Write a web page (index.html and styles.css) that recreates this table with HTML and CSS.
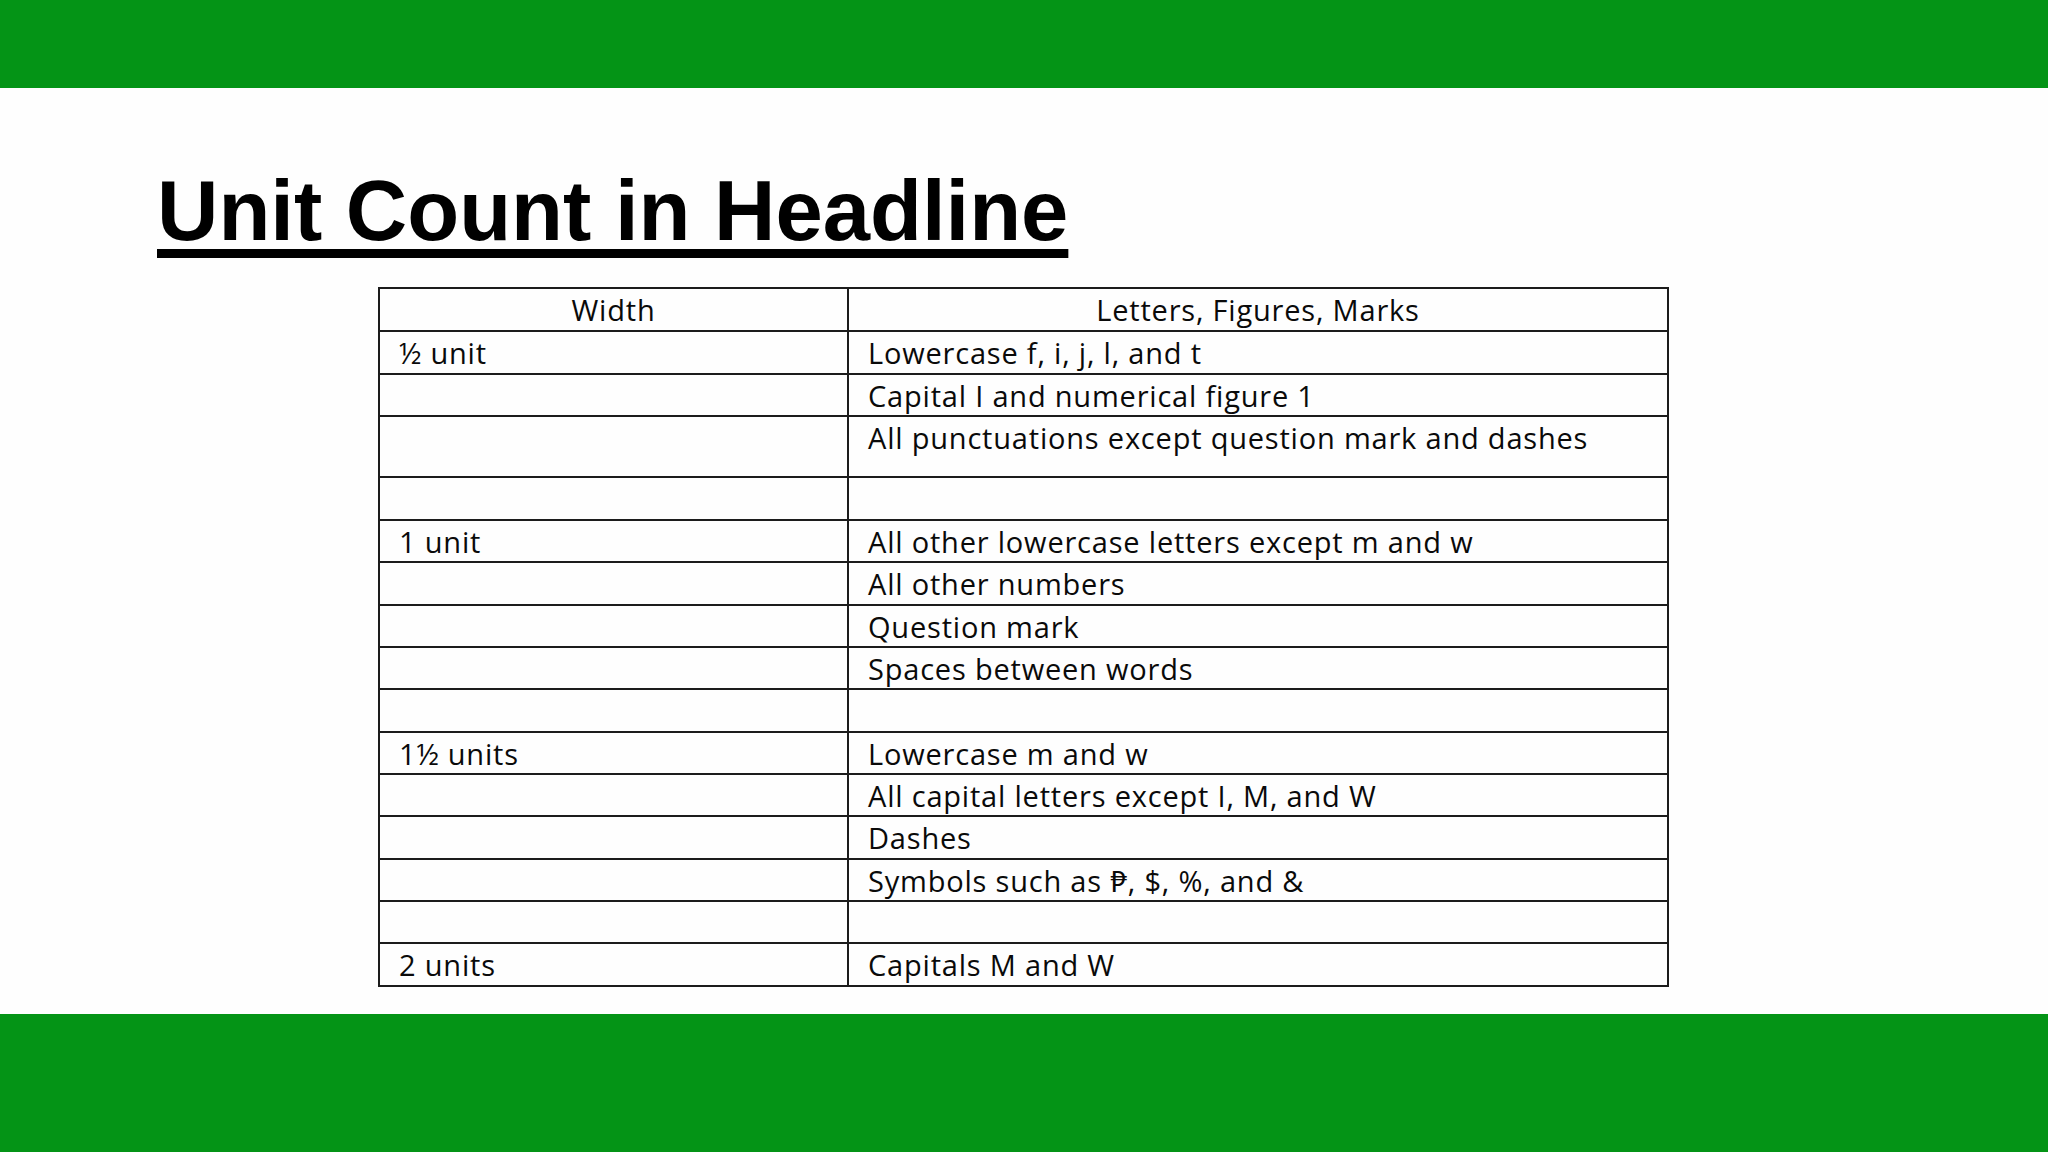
FILE: index.html
```html
<!DOCTYPE html>
<html lang="en">
<head>
<meta charset="utf-8">
<title>Unit Count in Headline</title>
<link rel="stylesheet" href="styles.css">
</head>
<body>
<div class="slide">
  <header class="bar bar-top"></header>
  <main class="content">
    <h1 class="title">Unit Count in Headline</h1>
    <table class="units">
      <colgroup><col class="col-width"><col class="col-letters"></colgroup>
      <thead>
        <tr><th>Width</th><th>Letters, Figures, Marks</th></tr>
      </thead>
      <tbody>
        <tr><td>½ unit</td><td>Lowercase f, i, j, l, and t</td></tr>
        <tr><td></td><td>Capital I and numerical figure 1</td></tr>
        <tr class="tall"><td></td><td>All punctuations except question mark and dashes</td></tr>
        <tr><td></td><td></td></tr>
        <tr><td>1 unit</td><td>All other lowercase letters except m and w</td></tr>
        <tr><td></td><td>All other numbers</td></tr>
        <tr><td></td><td>Question mark</td></tr>
        <tr><td></td><td>Spaces between words</td></tr>
        <tr><td></td><td></td></tr>
        <tr><td>1½ units</td><td>Lowercase m and w</td></tr>
        <tr><td></td><td>All capital letters except I, M, and W</td></tr>
        <tr><td></td><td>Dashes</td></tr>
        <tr><td></td><td>Symbols such as ₱, $, %, and &amp;</td></tr>
        <tr><td></td><td></td></tr>
        <tr><td>2 units</td><td>Capitals M and W</td></tr>
      </tbody>
    </table>
  </main>
  <footer class="bar bar-bottom"></footer>
</div>
</body>
</html>
```
FILE: styles.css
```css
html, body {
  margin: 0;
  padding: 0;
  background: #ffffff;
}

.slide {
  width: 2048px;
  height: 1152px;
  display: flex;
  flex-direction: column;
  background: #fefefe;
}

.bar {
  background: #049416;
  flex: none;
}

.bar-top {
  height: 88px;
}

.bar-bottom {
  height: 138px;
  margin-top: auto;
}

.content {
  flex: 1;
  display: flex;
  flex-direction: column;
  padding: 80px 0 0 157px;
}

.title {
  margin: 0;
  font-family: "Liberation Sans", Arial, sans-serif;
  font-weight: bold;
  font-size: 85px;
  line-height: 1;
  color: #000;
  text-decoration: underline;
  text-decoration-thickness: 9px;
  text-underline-offset: 9px;
  align-self: flex-start;
}

.units {
  margin: 34px 0 0 221px;
  width: 1291px;
  border-collapse: collapse;
  table-layout: fixed;
  font-family: "Open Sans", Lato, sans-serif;
  font-size: 29px;
  letter-spacing: 0.8px;
  color: #0a0a0a;
}

.col-width {
  width: 469px;
}

.units th,
.units td {
  border: 2px solid #1c1c1c;
  height: 42.35px;
  padding: 6px 0 0 19px;
  line-height: 1;
  vertical-align: top;
  box-sizing: border-box;
  font-weight: normal;
  text-align: left;
  white-space: nowrap;
}

.units th {
  text-align: center;
  padding-left: 0;
  height: 43.3px;
}

.units .tall td {
  height: 61.5px;
}
```
